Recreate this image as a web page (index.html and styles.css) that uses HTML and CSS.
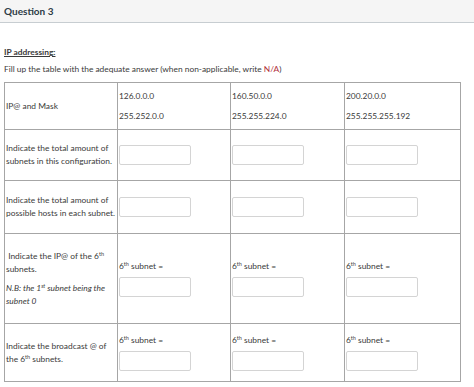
FILE: index.html
```html
<!doctype html>
<html lang="en">
    <head>
        <meta charset="UTF-8" />
        <meta name="viewport" content="width=device-width, initial-scale=1.0" />
        <title>Question 3</title>
        <link rel="stylesheet" href="styles.css">
    </head>
    <body>
        <div class="question-header">Question 3</div>

        <div class="question-body">
            <p class="section-title">IP addressing:</p>
            <p class="intro">
                Fill up the table with the adequate answer (when non-applicable, write
                <span class="na">N/A</span>)
            </p>

            <table class="answer-table">
                <colgroup>
                    <col class="col-label" />
                    <col class="col-a" />
                    <col class="col-b" />
                    <col class="col-c" />
                </colgroup>
                <tr class="row-ip">
                    <td><p>IP@ and Mask</p></td>
                    <td><p>126.0.0.0</p><p>255.252.0.0</p></td>
                    <td><p>160.50.0.0</p><p>255.255.224.0</p></td>
                    <td><p>200.20.0.0</p><p>255.255.255.192</p></td>
                </tr>
                <tr class="row-subnets">
                    <td><p>Indicate the total amount of subnets in this configuration.</p></td>
                    <td><input type="text" class="answer" /></td>
                    <td><input type="text" class="answer" /></td>
                    <td><input type="text" class="answer" /></td>
                </tr>
                <tr class="row-hosts">
                    <td><p>Indicate the total amount of possible hosts in each subnet.</p></td>
                    <td><input type="text" class="answer" /></td>
                    <td><input type="text" class="answer" /></td>
                    <td><input type="text" class="answer" /></td>
                </tr>
                <tr class="row-sixth">
                    <td>
                        <p>&nbsp;Indicate the IP@ of the 6<sup>th</sup> subnets.</p>
                        <p class="note">N.B: the 1<sup>st</sup> subnet being the subnet 0</p>
                    </td>
                    <td><p class="label">6<sup>th</sup> subnet =</p><input type="text" class="answer" /></td>
                    <td><p class="label">6<sup>th</sup> subnet =</p><input type="text" class="answer" /></td>
                    <td><p class="label">6<sup>th</sup> subnet =</p><input type="text" class="answer" /></td>
                </tr>
                <tr class="row-broadcast">
                    <td><p>Indicate the broadcast @ of the 6<sup>th</sup> subnets.</p></td>
                    <td><p class="label">6<sup>th</sup> subnet =</p><input type="text" class="answer" /></td>
                    <td><p class="label">6<sup>th</sup> subnet =</p><input type="text" class="answer" /></td>
                    <td><p class="label">6<sup>th</sup> subnet =</p><input type="text" class="answer" /></td>
                </tr>
            </table>
        </div>
    </body>
</html>
```

FILE: styles.css
```css
body {
    margin: 0;
    font-family: Lato, "Liberation Sans", sans-serif;
    color: #3a3a3a;
    background-color: #fff;
}
.question-header {
    height: 22px;
    line-height: 22px;
    padding: 0 4px;
    font-size: 10px;
    font-weight: bold;
    color: #2d3b45;
    background-color: #f5f5f5;
    border-bottom: 1px solid #c7cdd1;
}
.question-body {
    padding: 0 4px;
}
.section-title {
    margin: 23px 0 0;
    font-size: 8.4px;
    line-height: 13px;
    font-weight: bold;
    text-decoration: underline;
}
.intro {
    margin: 4px 0 0;
    font-size: 8.4px;
    line-height: 13px;
}
.na {
    color: #b0303a;
}
.answer-table {
    margin-top: 6px;
    width: 456px;
    table-layout: fixed;
    border-collapse: collapse;
    font-size: 8.4px;
    line-height: 13px;
}
.col-label,
.col-a {
    width: 113px;
}
.col-b {
    width: 114px;
}
.col-c {
    width: 116px;
}
.answer-table td {
    border: 1px solid #a6a6a6;
    padding: 0 1px;
    vertical-align: middle;
}
.answer-table p {
    margin: 0;
}
.row-ip {
    height: 47px;
}
.row-ip td p + p {
    margin-top: 7px;
}
.row-subnets {
    height: 51px;
}
.row-hosts {
    height: 53px;
}
.row-sixth {
    height: 90px;
}
.row-broadcast {
    height: 58px;
}
.note {
    font-style: italic;
    margin-top: 6px !important;
}
.label {
    margin-bottom: 4px !important;
}
sup {
    font-size: 5.5px;
    line-height: 1;
    vertical-align: 3px;
}
.answer {
    display: block;
    box-sizing: border-box;
    width: 72px;
    height: 20px;
    margin: 0;
    border: 1px solid #d4d4d4;
    border-radius: 2px;
    background-color: #fff;
}
```
